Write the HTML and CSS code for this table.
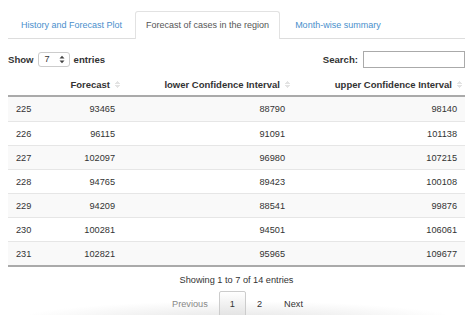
FILE: index.html
```html
<!DOCTYPE html>
<html lang="en">

<head>
  <meta charset="UTF-8">
  <title>Forecast</title>
  <link rel="stylesheet" href="styles.css">
</head>

<body>

  <!-- tabs -->
  <ul class="nav-tabs">
    <li class="tab"><a href="#">History and Forecast Plot</a></li>
    <li class="tab active"><a href="#">Forecast of cases in the region</a></li>
    <li class="tab"><a href="#">Month-wise summary</a></li>
  </ul>

  <!-- table controls -->
  <div class="dt-top">
    <div class="dt-length">
      Show
      <span class="fake-select">7
        <svg width="6" height="9" viewBox="0 0 6 9"><path d="M0.5 3.5 L3 0.8 L5.5 3.5 Z M0.5 5.5 L3 8.2 L5.5 5.5 Z" fill="#444"/></svg>
      </span>
      entries
    </div>
    <div class="dt-search">
      Search: <input type="text" class="search-box">
    </div>
  </div>

  <!-- forecast table -->
  <table class="dt-table">
    <colgroup>
      <col class="c1">
      <col class="c2">
      <col class="c3">
      <col class="c4">
    </colgroup>
    <thead>
      <tr>
        <th></th>
        <th class="num sorting">Forecast</th>
        <th class="num sorting">lower Confidence Interval</th>
        <th class="num sorting">upper Confidence Interval</th>
      </tr>
    </thead>
    <tbody>
      <tr><td>225</td><td class="num">93465</td><td class="num">88790</td><td class="num">98140</td></tr>
      <tr><td>226</td><td class="num">96115</td><td class="num">91091</td><td class="num">101138</td></tr>
      <tr><td>227</td><td class="num">102097</td><td class="num">96980</td><td class="num">107215</td></tr>
      <tr><td>228</td><td class="num">94765</td><td class="num">89423</td><td class="num">100108</td></tr>
      <tr><td>229</td><td class="num">94209</td><td class="num">88541</td><td class="num">99876</td></tr>
      <tr><td>230</td><td class="num">100281</td><td class="num">94501</td><td class="num">106061</td></tr>
      <tr><td>231</td><td class="num">102821</td><td class="num">95965</td><td class="num">109677</td></tr>
    </tbody>
  </table>

  <div class="dt-info">Showing 1 to 7 of 14 entries</div>

  <div class="dt-paginate">
    <a href="#" class="page-btn prev">Previous</a>
    <a href="#" class="page-btn current">1</a>
    <a href="#" class="page-btn">2</a>
    <a href="#" class="page-btn">Next</a>
  </div>

</body>

</html>
```

FILE: styles.css
```css
/* base */
body {
  font-family: "Liberation Sans", Arial, sans-serif;
  font-size: 9.2px;
  color: #333;
  margin: 0;
  padding: 11px 9px 0 8px;
  background-color: #fff;
}

/* tabs */
.nav-tabs {
  list-style-type: none;
  margin: 0;
  padding: 0;
  display: flex;
  border-bottom: 1px solid #ddd;
  font-size: 9px;
}

.tab {
  margin-right: 2px;
}

.tab a {
  display: block;
  padding: 0 10px 0 12px;
  height: 26px;
  line-height: 27px;
  color: #4a8fcc;
  text-decoration: none;
  border: 1px solid transparent;
  border-bottom: none;
  border-radius: 3px 3px 0 0;
}

.tab.active a {
  color: #555;
  border-color: #e2e2e2;
  background-color: #fff;
  height: 27px;
  margin-bottom: -1px;
  padding: 0 10px;
}

/* length + search */
.dt-top {
  display: flex;
  justify-content: space-between;
  align-items: center;
  margin-top: 11px;
  height: 18px;
  font-weight: bold;
  font-size: 9.6px;
}

.dt-length {
  display: flex;
  align-items: center;
  gap: 4px;
}

.fake-select {
  display: flex;
  align-items: center;
  justify-content: space-between;
  width: 20px;
  height: 13px;
  padding: 0 4px 0 6px;
  border: 1px solid #ccc;
  border-radius: 3px;
  font-weight: normal;
  font-size: 9.2px;
  color: #333;
  background-color: #fff;
}

.dt-search {
  display: flex;
  align-items: center;
  gap: 5px;
}

.search-box {
  width: 100px;
  height: 15px;
  padding: 0;
  margin: 0;
  border: 1px solid #aaa;
  border-radius: 0;
}

/* table */
.dt-table {
  width: 100%;
  border-collapse: collapse;
  table-layout: fixed;
  margin-top: 5px;
}

.c1 { width: 42px; }
.c2 { width: 73px; }
.c3 { width: 170px; }

th {
  font-weight: bold;
  font-size: 9.5px;
  height: 22px;
  padding: 0 13px 0 8px;
  border-bottom: 2px solid #aaa;
  position: relative;
  white-space: nowrap;
}

th.num {
  text-align: right;
}

/* sort arrows */
th.sorting::after {
  content: "";
  position: absolute;
  right: 3px;
  top: 7px;
  width: 5px;
  height: 9px;
  background:
    linear-gradient(to bottom right, transparent 50%, #e3e3e3 50%) 0 0 / 3px 4px no-repeat,
    linear-gradient(to bottom left, transparent 50%, #e3e3e3 50%) 2px 0 / 3px 4px no-repeat,
    linear-gradient(to top right, transparent 50%, #e3e3e3 50%) 0 5px / 3px 4px no-repeat,
    linear-gradient(to top left, transparent 50%, #e3e3e3 50%) 2px 5px / 3px 4px no-repeat;
}

td {
  height: 23px;
  padding: 0 8px;
  border-top: 1px solid #e6e6e6;
  white-space: nowrap;
}

td.num {
  text-align: right;
}

tbody tr:first-child td {
  border-top: none;
  height: 24px;
}

tbody tr:nth-child(odd) {
  background-color: #f9f9f9;
}

tbody tr:last-child td {
  border-bottom: 2px solid #aaa;
}

/* info + pages */
.dt-info {
  text-align: center;
  margin-top: 7px;
  height: 12px;
  line-height: 12px;
}

.dt-paginate {
  display: flex;
  justify-content: center;
  align-items: center;
  margin: 6px 20px 0 22px;
  height: 30px;
  background: radial-gradient(ellipse 55% 70% at 50% 100%, #e2e2e2, rgba(255, 255, 255, 0) 100%);
}

.page-btn {
  display: block;
  padding: 0 10px;
  height: 30px;
  line-height: 24px;
  color: #333;
  text-decoration: none;
  border: 1px solid transparent;
  border-radius: 2px;
}

.page-btn.prev {
  color: #888;
}

.page-btn.current {
  border-color: #ccc;
  background: linear-gradient(to bottom, #fff 0%, #dcdcdc 100%);
  padding: 0 10px;
}
```
